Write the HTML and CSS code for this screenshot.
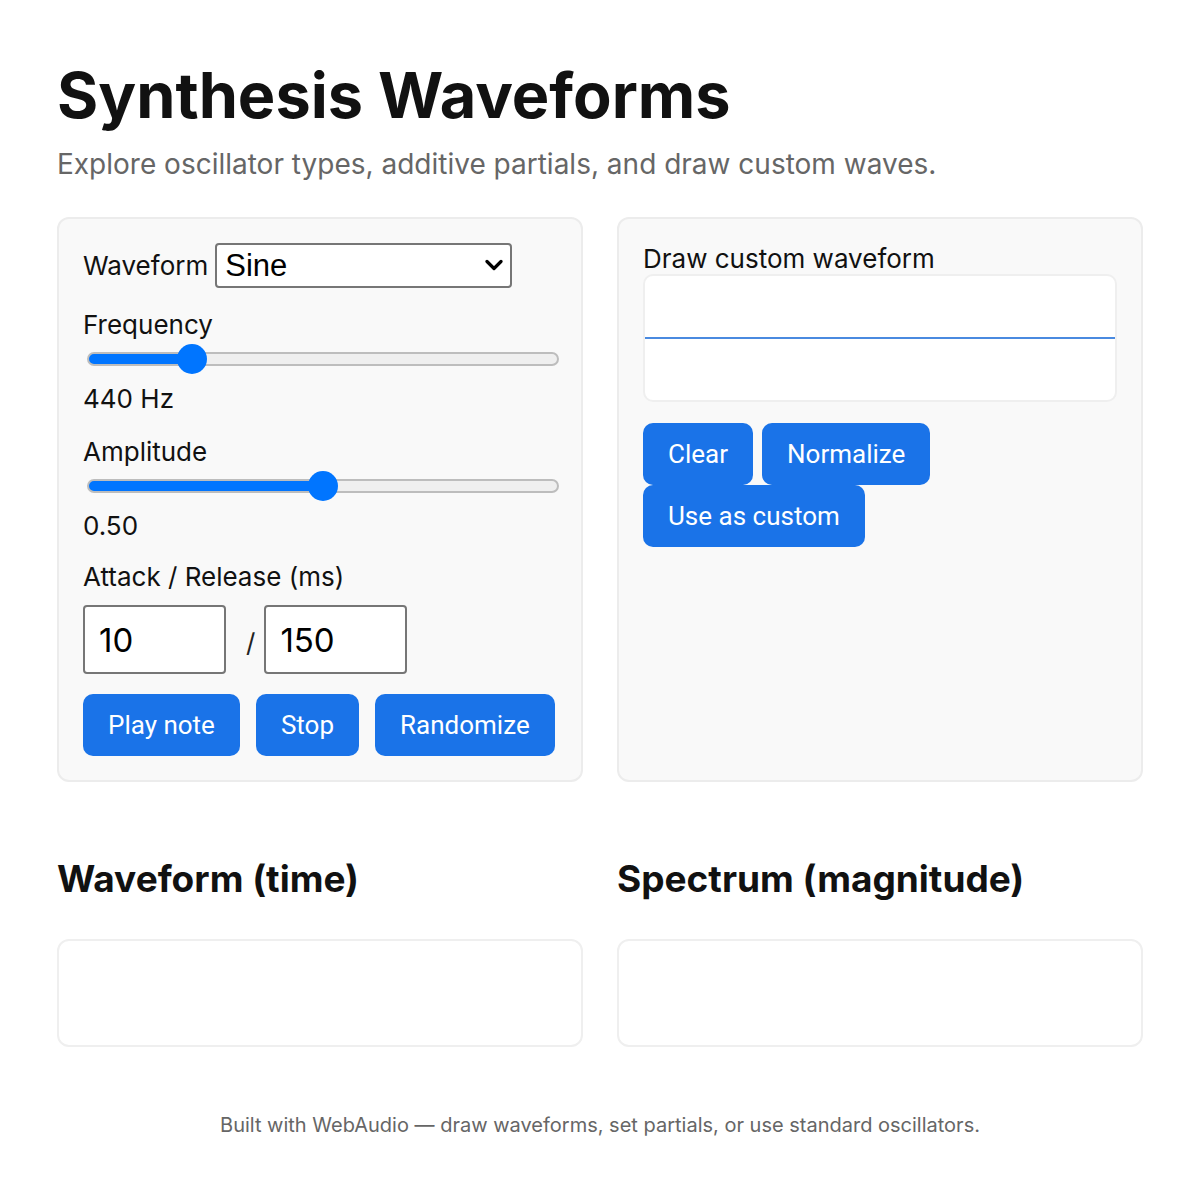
FILE: index.html
```html
<!DOCTYPE html>
<html lang="en">
<head>
    <meta charset="UTF-8">
    <meta name="viewport" content="width=device-width, initial-scale=1.0">
    <title>Synthesis Waveforms</title>
    <link rel="stylesheet" href="styles.css">
</head>
<body>
    <div class="page">
        <h1>Synthesis Waveforms</h1>
        <p class="lead">Explore oscillator types, additive partials, and draw custom waves.</p>

        <div class="panels">
            <div class="card">
                <div class="row">
                    <label for="type">Waveform</label>
                    <span class="select-wrap">
                        <select id="type">
                            <option>Sine</option>
                            <option>Square</option>
                            <option>Sawtooth</option>
                            <option>Triangle</option>
                            <option>Custom</option>
                        </select>
                        <svg class="chevron" width="18" height="12" viewBox="0 0 18 12">
                            <path d="M2 2.5 L9 9.5 L16 2.5" fill="none" stroke="#000" stroke-width="3.2" stroke-linecap="round" stroke-linejoin="round"/>
                        </svg>
                    </span>
                </div>

                <div class="field first">
                    <label for="freq">Frequency</label>
                    <input type="range" id="freq" class="slider" min="50" max="2000" value="440" style="--fill: 20%">
                    <div class="value">440 Hz</div>
                </div>

                <div class="field">
                    <label for="amp">Amplitude</label>
                    <input type="range" id="amp" class="slider" min="0" max="1" step="0.01" value="0.5" style="--fill: 50%">
                    <div class="value">0.50</div>
                </div>

                <div class="field env-field">
                    <label>Attack / Release (ms)</label>
                    <div class="env">
                        <input type="number" id="attack" value="10">
                        <span class="slash">/</span>
                        <input type="number" id="release" value="150">
                    </div>
                </div>

                <div class="buttons single">
                    <button id="play">Play note</button>
                    <button id="stop">Stop</button>
                    <button id="random">Randomize</button>
                </div>
            </div>

            <div class="card">
                <label class="draw-label">Draw custom waveform</label>
                <div class="draw-pad">
                    <div class="zero-line"></div>
                </div>
                <div class="buttons tight">
                    <button id="clear">Clear</button>
                    <button id="normalize">Normalize</button>
                    <button id="use">Use as custom</button>
                </div>
            </div>
        </div>

        <div class="plots">
            <div>
                <h2>Waveform (time)</h2>
                <div class="plot"></div>
            </div>
            <div>
                <h2>Spectrum (magnitude)</h2>
                <div class="plot"></div>
            </div>
        </div>

        <footer>Built with WebAudio — draw waveforms, set partials, or use standard oscillators.</footer>
    </div>
</body>
</html>
```

FILE: styles.css
```css
body {
    margin: 0;
    font-family: Inter, "Noto Sans", sans-serif;
    color: #111;
    background-color: #fff;
}

.page {
    padding: 0 57px;
}

h1 {
    font-size: 63px;
    font-weight: 700;
    margin: 0;
    padding-top: 57px;
    line-height: 76px;
}

.lead {
    font-size: 28px;
    color: #666;
    margin: 14px 0 36px 0;
    line-height: 34px;
}

.panels {
    display: grid;
    grid-template-columns: minmax(0, 1fr) minmax(0, 1fr);
    gap: 34px;
}

.card {
    background-color: #f9f9f9;
    border: 2px solid #ececec;
    border-radius: 12px;
    padding: 24px;
}

label {
    font-size: 26px;
    display: block;
    line-height: 29px;
}

.row {
    display: flex;
    align-items: center;
    gap: 7px;
}

.select-wrap {
    position: relative;
    display: inline-block;
}

select {
    -webkit-appearance: none;
    appearance: none;
    font-family: "Liberation Sans", Arial, sans-serif;
    font-size: 31px;
    width: 297px;
    height: 45px;
    border: 2px solid #767676;
    border-radius: 4px;
    background-color: #fff;
    padding: 0 8px;
    color: #000;
    display: block;
}

.chevron {
    position: absolute;
    right: 9px;
    top: 16px;
    pointer-events: none;
}

.field {
    margin-top: 24px;
}

.field.first,
.field.env-field {
    margin-top: 22px;
}

.slider {
    -webkit-appearance: none;
    appearance: none;
    display: block;
    width: 472px;
    height: 30px;
    margin: 5px 0 0 4px;
    background: transparent;
}

.slider::-webkit-slider-runnable-track {
    height: 14px;
    border-radius: 7px;
    border: 2px solid #bdbdbd;
    box-sizing: border-box;
    background: linear-gradient(to right, #0075ff 0, #0075ff calc(15px + var(--fill) * 0.94), #efefef calc(15px + var(--fill) * 0.94));
}

.slider::-webkit-slider-thumb {
    -webkit-appearance: none;
    width: 30px;
    height: 30px;
    border-radius: 50%;
    background-color: #0075ff;
    margin-top: -10px;
    border: none;
}

.value {
    font-size: 26px;
    line-height: 29px;
    margin-top: 10px;
}

.env {
    display: flex;
    align-items: center;
    margin-top: 14px;
}

.env input {
    width: 143px;
    height: 69px;
    box-sizing: border-box;
    border: 2px solid #767676;
    border-radius: 4px;
    font-family: Inter, sans-serif;
    font-size: 33px;
    padding: 0 14px;
    background-color: #fff;
    color: #000;
}

.env input::-webkit-inner-spin-button {
    -webkit-appearance: none;
}

.slash {
    font-size: 26px;
    color: #222;
    padding-top: 6px;
    margin: 0 9px 0 20px;
}

.buttons {
    display: flex;
    flex-wrap: wrap;
    gap: 16px;
    margin-top: 20px;
}

.buttons.single {
    flex-wrap: nowrap;
}

.buttons.tight {
    column-gap: 9px;
    row-gap: 0;
    margin-top: 21px;
}

button {
    font-family: Roboto, "Liberation Sans", sans-serif;
    font-size: 26px;
    height: 62px;
    padding: 0 25px;
    background-color: #1a73e8;
    color: #fff;
    border: none;
    border-radius: 10px;
    cursor: pointer;
    white-space: nowrap;
    flex-shrink: 0;
}

button:hover {
    background-color: #1765cc;
}

.draw-label {
    margin-top: 1px;
}

.draw-pad {
    height: 124px;
    margin-top: 1px;
    background-color: #fff;
    border: 2px solid #efefef;
    border-radius: 10px;
    display: flex;
    align-items: center;
}

.zero-line {
    width: 100%;
    height: 2px;
    background-color: #4a8ae0;
}

.plots {
    display: grid;
    grid-template-columns: minmax(0, 1fr) minmax(0, 1fr);
    gap: 34px;
    margin-top: 75px;
}

h2 {
    font-size: 37px;
    font-weight: 700;
    line-height: 44px;
    margin: 0 0 38px 0;
}

.plot {
    height: 104px;
    background-color: #fff;
    border: 2px solid #efefef;
    border-radius: 12px;
}

footer {
    text-align: center;
    font-size: 20px;
    color: #666;
    margin-top: 66px;
    padding-bottom: 40px;
}
```
